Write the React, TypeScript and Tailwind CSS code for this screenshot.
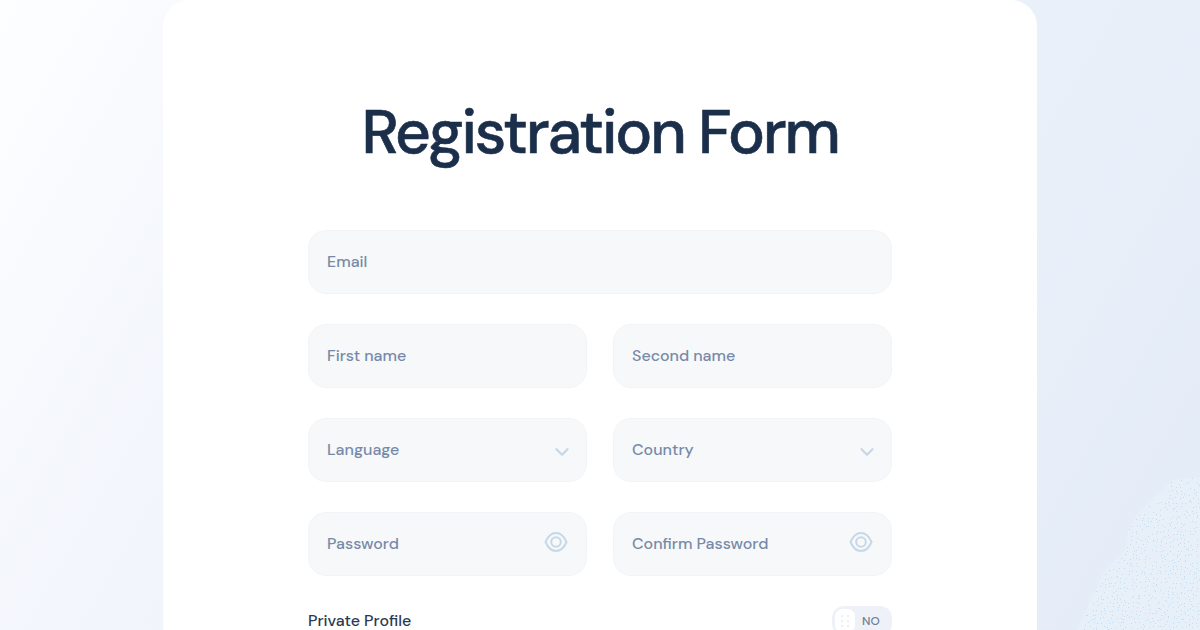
import { ChevronDown } from "lucide-react";

const font = { fontFamily: '"DM Sans", Inter, "Liberation Sans", sans-serif' };

// left edge of the dotted shape, top to bottom
const edge = [
  [1200, 477],
  [1172, 480],
  [1140, 510],
  [1128, 528],
  [1125, 550],
  [1103, 573],
  [1077, 630],
];

function edgeAt(y: number) {
  for (let i = 0; i < edge.length - 1; i++) {
    const [x1, y1] = edge[i];
    const [x2, y2] = edge[i + 1];
    if (y >= y1 && y <= y2) return x1 + ((y - y1) / (y2 - y1)) * (x2 - x1);
  }
  return 1200;
}

function makeDots() {
  const dots: { x: number; y: number }[] = [];
  let seed = 7;
  const rand = () => {
    seed = (seed * 16807) % 2147483647;
    return seed / 2147483647;
  };
  for (let gy = 477; gy < 630; gy += 4) {
    for (let gx = 1075; gx < 1200; gx += 4) {
      const x = gx + rand() * 3;
      const y = gy + rand() * 3;
      if (x < edgeAt(y) + 1) continue;
      const depth = ((x - 1075) / 125 + (y - 477) / 153) / 2;
      if (rand() > 0.5 + depth * 0.5) continue;
      dots.push({ x: Math.round(x), y: Math.round(y) });
    }
  }
  return dots;
}

function Field({ label, icon }: { label: string; icon?: "chevron" | "eye" }) {
  return (
    <div className="flex h-16 items-center justify-between rounded-[18px] border border-[#f2f4f7] bg-[#f6f8fa] px-[18px]">
      <span className="text-[16px] font-medium text-[#768aa8]">{label}</span>
      {icon === "chevron" && (
        <ChevronDown size={22} strokeWidth={2.5} className="mt-[3px] mr-[-5px] text-[#c6d8e8]" />
      )}
      {icon === "eye" && (
        <svg width="24" height="22" viewBox="0 0 24 22" fill="none" stroke="#c6d8e8" strokeWidth="2" className="mb-[4px]">
          <path d="M1.5 11C4 5.2 7.600 2 12 2s8 3.200 10.500 9C20 16.800 16.400 20 12 20S4 16.800 1.500 11Z" />
          <circle cx="12" cy="11" r="4.800" />
        </svg>
      )}
    </div>
  );
}

export default function App() {
  const dots = makeDots();
  return (
    <div
      style={font}
      className="relative flex h-[630px] w-[1200px] justify-center overflow-hidden bg-[linear-gradient(120deg,#fdfeff_0%,#f3f6fc_25%,#e8eff9_76%,#e3ebf7_100%)]"
    >
      <svg width="1200" height="630" className="absolute inset-0">
        <polygon points={edge.map((p) => p.join(",")).join(" ") + " 1200,630"} fill="#e7eff9" />
        {dots.map((d, i) => (
          <rect key={i} x={d.x} y={d.y} width="1" height="1" fill="#c3dcee" />
        ))}
      </svg>

      <div className="relative h-[660px] w-[874px] rounded-[26px] bg-white px-[145px] pt-[93px]">
        <h1 className="text-center text-[62px] leading-[78px] font-medium tracking-[-2.2px] text-[#1b2e4a] [-webkit-text-stroke:0.6px_#1b2e4a]">
          Registration Form
        </h1>

        <div className="mt-[59px] flex flex-col gap-[30px]">
          <Field label="Email" />
          <div className="grid grid-cols-2 gap-[26px]">
            <Field label="First name" />
            <Field label="Second name" />
          </div>
          <div className="grid grid-cols-2 gap-[26px]">
            <Field label="Language" icon="chevron" />
            <Field label="Country" icon="chevron" />
          </div>
          <div className="grid grid-cols-2 gap-[26px]">
            <Field label="Password" icon="eye" />
            <Field label="Confirm Password" icon="eye" />
          </div>
          <div className="flex items-start justify-between">
            <span className="mt-[3px] text-[16px] font-medium text-[#2b3a52]">Private Profile</span>
            <div className="flex h-[30px] w-[60px] items-center rounded-[12px] bg-[#eef2f8] px-[3px]">
              <div className="grid h-6 w-[20px] grid-cols-2 place-items-center content-center gap-[3px] rounded-[8px] bg-white px-[5px]">
                {[0, 1, 2, 3, 4, 5].map((n) => (
                  <span key={n} className="h-[2px] w-[2px] rounded-full bg-[#e4ebf3]" />
                ))}
              </div>
              <span className="ml-[7px] text-[12px] font-medium text-[#6f7f9b]">NO</span>
            </div>
          </div>
        </div>
      </div>
    </div>
  );
}
